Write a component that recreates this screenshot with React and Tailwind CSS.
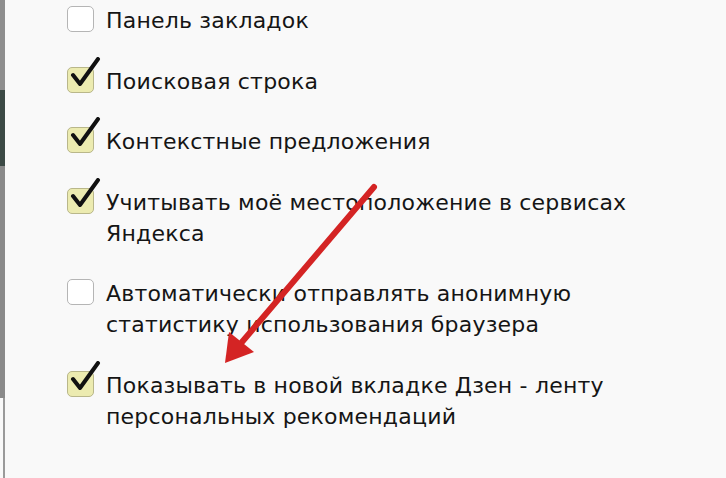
import React from 'react';

const items = [
  { checked: false, lines: ['Панель закладок'] },
  { checked: true, lines: ['Поисковая строка'] },
  { checked: true, lines: ['Контекстные предложения'] },
  { checked: true, lines: ['Учитывать моё местоположение в сервисах', 'Яндекса'] },
  { checked: false, lines: ['Автоматически отправлять анонимную', 'статистику использования браузера'] },
  { checked: true, lines: ['Показывать в новой вкладке Дзен - ленту', 'персональных рекомендаций'] },
];

const Checkbox = ({ checked }) => (
  <div className="relative w-[27px] h-[26px] shrink-0 mt-[1px]">
    <div
      className={`w-full h-full rounded-[5px] border ${
        checked ? 'bg-[#ecebb0] border-[#b9b78a]' : 'bg-white border-[#b5b5b5]'
      }`}
    />
    {checked && (
      <svg className="absolute left-0 top-[-10px]" width="34" height="36" viewBox="0 0 34 36">
        <path d="M6 18 L13 27 L31 2" fill="none" stroke="#111" strokeWidth="4" strokeLinecap="round" strokeLinejoin="round" />
      </svg>
    )}
  </div>
);

export default function App() {
  return (
    <div className="relative w-[726px] h-[478px] overflow-hidden bg-[#f9f9f9] flex" style={{ fontFamily: '"DejaVu Sans", sans-serif' }}>
      {/* левая полоса от окна за диалогом */}
      <div className="w-[5px] flex flex-col shrink-0">
        <div className="h-[90px] bg-[#8e8e8e]" />
        <div className="h-[76px] bg-[#3c4a45]" />
        <div className="h-[232px] bg-[#8a8a8a]" />
        <div className="flex-1 flex justify-end">
          <div className="w-[2px] bg-[#9a9a9a]" />
        </div>
      </div>

      <div className="flex flex-col gap-[29.5px] pl-[62px] pt-[5px]">
        {items.map((item, i) => (
          <div key={i} className="flex gap-[12px] items-start">
            <Checkbox checked={item.checked} />
            <div className="text-[22px] leading-[31px] text-[#151515] tracking-[0.2px]">
              {item.lines.map((l, j) => (
                <div key={j} className="whitespace-nowrap">{l}</div>
              ))}
            </div>
          </div>
        ))}
      </div>

      {/* красная стрелка */}
      <svg className="absolute left-0 top-0 pointer-events-none" width="726" height="478" viewBox="0 0 726 478">
        <line x1="374" y1="187" x2="242" y2="342" stroke="#d42424" strokeWidth="6" strokeLinecap="round" />
        <polygon points="225,363 229,332 254,352" fill="#d42424" />
      </svg>
    </div>
  );
}
